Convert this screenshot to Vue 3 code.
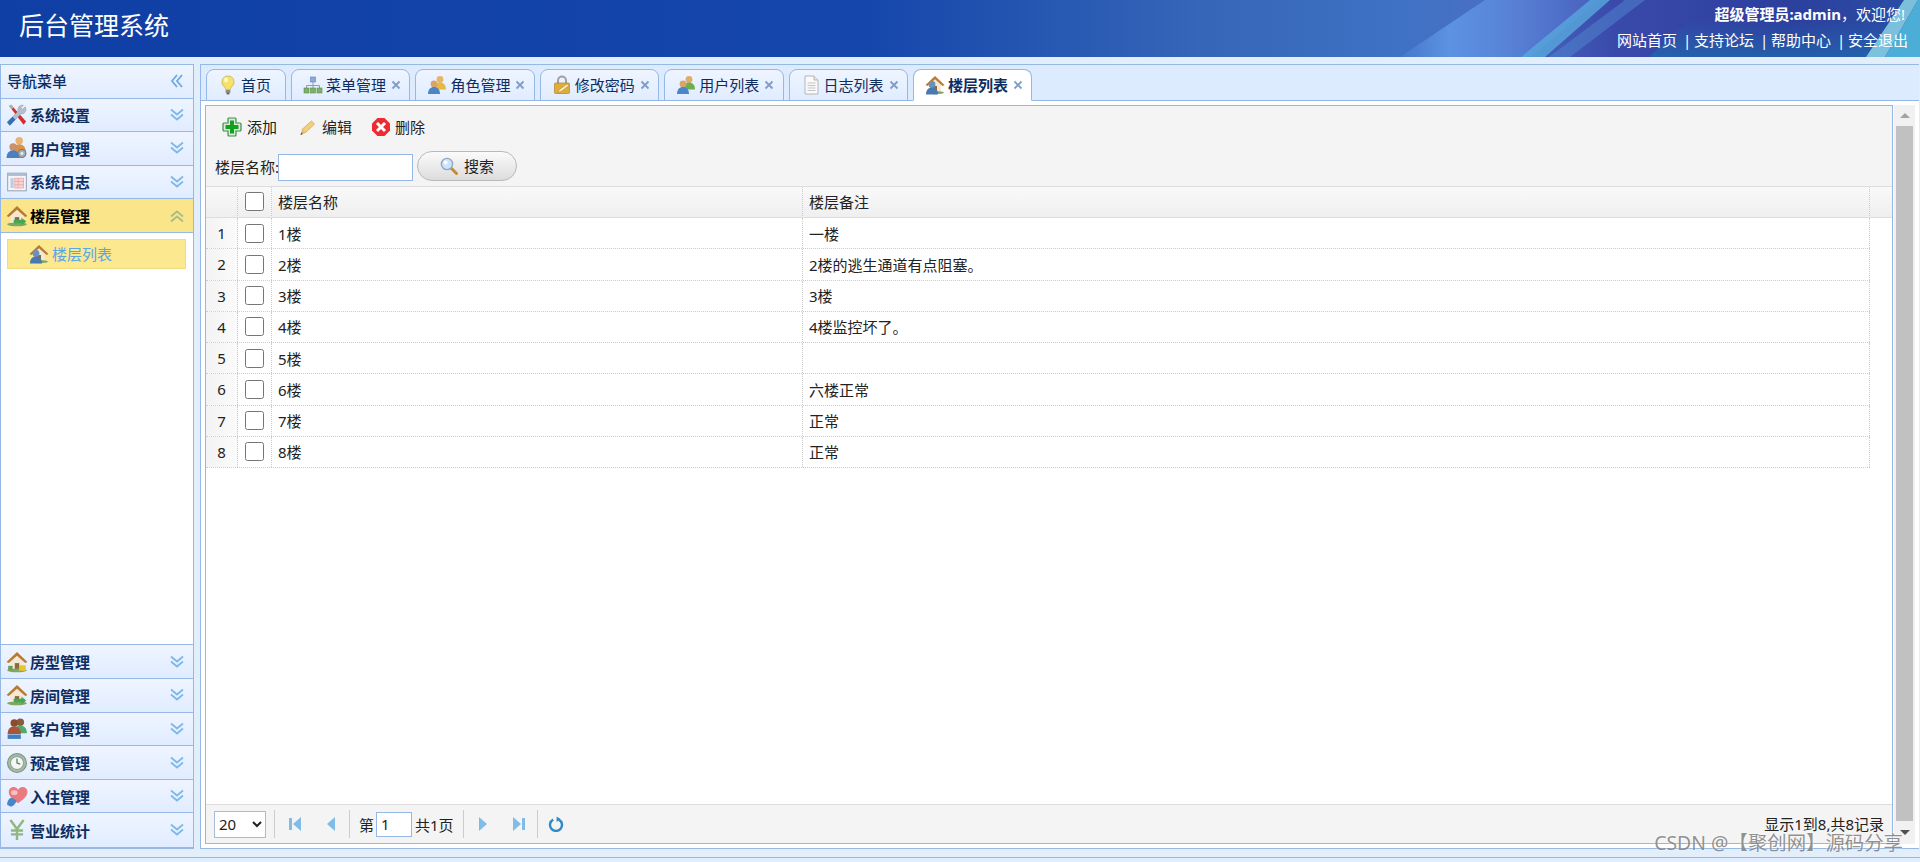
<template>
  <div class="page">
    <header class="top">
      <svg class="top-art" viewBox="0 0 1920 57" preserveAspectRatio="none">
        <defs>
          <linearGradient id="topBase" x1="0" x2="1" y1="0" y2="0">
            <stop offset="0" stop-color="#0f3fa5" />
            <stop offset="0.45" stop-color="#1546ab" />
            <stop offset="0.625" stop-color="#3566b8" />
            <stop offset="0.73" stop-color="#3f72c4" />
            <stop offset="0.78" stop-color="#4a6fc4" />
            <stop offset="0.84" stop-color="#3a4aab" />
            <stop offset="0.93" stop-color="#2c3f9d" />
            <stop offset="1" stop-color="#2a4ea5" />
          </linearGradient>
          <linearGradient id="topBand" x1="0" x2="1" y1="0" y2="0">
            <stop offset="0" stop-color="#5f96e6" stop-opacity="0.15" />
            <stop offset="0.25" stop-color="#5f96e6" stop-opacity="0.9" />
            <stop offset="1" stop-color="#5f80d8" stop-opacity="0.3" />
          </linearGradient>
          <linearGradient id="topGlow" x1="0" x2="0" y1="0" y2="1">
            <stop offset="0" stop-color="#2168ae" stop-opacity="0" />
            <stop offset="1" stop-color="#2168ae" stop-opacity="0.75" />
          </linearGradient>
        </defs>
        <rect width="1920" height="57" fill="url(#topBase)" />
        <polygon points="1400,57 1530,57 1600,0 1485,0" fill="url(#topBand)" />
        <polygon points="1649,57 1880,57 1920,20 1690,20" fill="url(#topGlow)" />
        <polygon points="1521,57 1545,57 1610,0 1590,0" fill="#58a8dc" opacity="0.8" />
        <polygon points="1549,57 1570,57 1645,0 1625,0" fill="#4f88d0" opacity="0.5" />
        <polygon points="1866,57 1885,57 1918,0 1904,0" fill="#8ad4e6" opacity="0.85" />
        <polygon points="1885,57 1920,57 1920,0 1918,0" fill="#4caed6" />
      </svg>
      <h1 class="top-title">后台管理系统</h1>
      <div class="top-right">
        <div class="top-user"><b>超级管理员:admin</b>，欢迎您!</div>
        <div class="top-links">
          <template v-for="(link, i) in topLinks" :key="link">
            <span v-if="i" class="top-sep">|</span>
            <span>{{ link }}</span>
          </template>
        </div>
      </div>
    </header>

    <div class="layout">
      <aside class="side">
        <div class="nav-title">
          <span>导航菜单</span>
          <svg class="chev chev-left" viewBox="0 0 14 14"><path d="M7 1 2 7l5 6M12 1 7 7l5 6" /></svg>
        </div>
        <div v-for="item in navTop" :key="item.label" class="nav-row" :class="{ 'nav-row--on': item.active }">
          <svg class="nav-icon" viewBox="0 0 20 20" v-html="icons[item.icon]"></svg>
          <span class="nav-text">{{ item.label }}</span>
          <svg class="chev" viewBox="0 0 14 14"><path :d="item.active ? chevUp : chevDown" /></svg>
        </div>
        <div class="nav-body">
          <div class="nav-leaf">
            <svg class="leaf-icon" viewBox="0 0 20 20" v-html="icons.houseUser"></svg>
            <span>楼层列表</span>
          </div>
        </div>
        <div v-for="item in navBottom" :key="item.label" class="nav-row">
          <svg class="nav-icon" viewBox="0 0 20 20" v-html="icons[item.icon]"></svg>
          <span class="nav-text">{{ item.label }}</span>
          <svg class="chev" viewBox="0 0 14 14"><path :d="chevDown" /></svg>
        </div>
      </aside>

      <main class="main">
        <div class="tabs">
          <div
            v-for="tab in tabs"
            :key="tab.label"
            class="tab"
            :class="{ 'tab--on': tab.active, 'tab--home': !tab.close }"
          >
            <svg class="tab-icon" viewBox="0 0 20 20" v-html="icons[tab.icon]"></svg>
            <span class="tab-text">{{ tab.label }}</span>
            <svg v-if="tab.close" class="tab-close" viewBox="0 0 10 10"><path d="M1.5 1.5l7 7M8.5 1.5l-7 7" /></svg>
          </div>
        </div>

        <div class="content">
          <section class="grid-box">
            <div class="toolbar">
              <div class="tool-row">
                <span class="tool-btn">
                  <svg class="tool-add" viewBox="0 0 20 20">
                    <path d="M7 1h6a1 1 0 0 1 1 1v4h4a1 1 0 0 1 1 1v6a1 1 0 0 1-1 1h-4v4a1 1 0 0 1-1 1H7a1 1 0 0 1-1-1v-4H2a1 1 0 0 1-1-1V7a1 1 0 0 1 1-1h4V2a1 1 0 0 1 1-1z" fill="#d9ecd8" stroke="#3d8a4a" stroke-width="1.2" />
                    <path d="M8 3.5h4V8h4.5v4H12v4.5H8V12H3.5V8H8z" fill="#13a11f" />
                  </svg>
                  <span class="tool-text">添加</span>
                </span>
                <span class="tool-btn tool-btn--edit">
                  <svg class="tool-pen" viewBox="0 0 18 18">
                    <path d="M3 11.5 12.5 3l3 3L6 15z" fill="#f2d079" stroke="#d6a640" stroke-width="0.8" />
                    <path d="M3 11.5 1.5 17 6 15z" fill="#e6b878" />
                    <path d="M1.5 17l.8-2.6 1.7 1.6z" fill="#5e5140" />
                  </svg>
                  <span class="tool-text">编辑</span>
                </span>
                <span class="tool-btn tool-btn--del">
                  <svg class="tool-del" viewBox="0 0 18 18">
                    <path d="M5.5 0h7L18 5.5v7L12.5 18h-7L0 12.5v-7z" fill="#ee2b30" />
                    <path d="M5 5l8 8M13 5l-8 8" stroke="#fff" stroke-width="3" />
                  </svg>
                  <span class="tool-text">删除</span>
                </span>
              </div>
              <div class="search-row">
                <label class="search-label">楼层名称:</label>
                <input class="search-input" type="text" />
                <button class="search-btn" type="button">
                  <svg class="search-icon" viewBox="0 0 18 18">
                    <path d="M11 11l5.5 5.5" stroke="#c98a35" stroke-width="3" stroke-linecap="round" />
                    <circle cx="7" cy="7" r="5.6" fill="#cfe4fa" stroke="#8fa9c4" stroke-width="1.4" />
                    <circle cx="5.6" cy="5.4" r="2" fill="#fff" />
                  </svg>
                  <span class="search-text">搜索</span>
                </button>
              </div>
            </div>

            <div class="grid-head">
              <div class="cell cell-num"></div>
              <div class="cell cell-check"><input type="checkbox" class="check" /></div>
              <div class="cell cell-text">楼层名称</div>
              <div class="cell cell-text">楼层备注</div>
              <div class="cell-fill"></div>
            </div>
            <div class="grid-body">
              <div v-for="(row, i) in rows" :key="row.name" class="grid-row">
                <div class="cell cell-num">{{ i + 1 }}</div>
                <div class="cell cell-check"><input type="checkbox" class="check" /></div>
                <div class="cell cell-text">{{ row.name }}</div>
                <div class="cell cell-text">{{ row.note }}</div>
              </div>
            </div>

            <div class="pager">
              <select class="pager-size"><option>20</option></select>
              <span class="pager-sep pager-sep--first"></span>
              <span class="pager-btn"><svg viewBox="0 0 14 16"><path d="M1 2h3v12H1zM13 1v14L5 8z" /></svg></span>
              <span class="pager-btn"><svg viewBox="0 0 14 16"><path d="M11 1v14L3 8z" /></svg></span>
              <span class="pager-sep"></span>
              <span class="pager-label">第</span>
              <input class="pager-input" type="text" value="1" />
              <span class="pager-label pager-label--total">共1页</span>
              <span class="pager-sep pager-sep--mid"></span>
              <span class="pager-btn"><svg viewBox="0 0 14 16"><path d="M3 1v14l8-7z" /></svg></span>
              <span class="pager-btn"><svg viewBox="0 0 14 16"><path d="M1 1v14l8-7zM10 2h3v12h-3z" /></svg></span>
              <span class="pager-sep pager-sep--tight"></span>
              <span class="pager-btn">
                <svg class="pager-refresh" viewBox="0 0 16 16">
                  <path d="M5.2 3.6A6 6 0 1 0 10.8 3.6" fill="none" stroke="#2f8ac8" stroke-width="2.4" />
                  <path d="M8.6 0.5v5.6L12.6 3z" fill="#2f8ac8" />
                </svg>
              </span>
              <span class="pager-info">显示1到8,共8记录</span>
            </div>
          </section>

          <div class="scrollbar">
            <span class="scroll-arrow scroll-arrow--up"></span>
            <span class="scroll-thumb"></span>
            <span class="scroll-arrow scroll-arrow--down"></span>
          </div>
        </div>
      </main>
    </div>

    <footer class="bottom"></footer>
    <div class="watermark">CSDN @【聚创网】源码分享</div>
  </div>
</template>

<script setup>
const chevDown = 'M1 1.5 7 6.5l6-5M1 6.5l6 5 6-5'
const chevUp = 'M1 7.5l6-5 6 5M1 12.5l6-5 6 5'

const house =
  '<path d="M4 9.5 10 4l6 5.5V17H4z" fill="#f4e8d2"/>' +
  '<path d="M10 1 19.5 10l-2 1L10 4.3 2.5 11l-2-1z" fill="#b87a30"/>' +
  '<rect x="8" y="11" width="4" height="6" fill="#8b6a40"/>' +
  '<ellipse cx="10" cy="17.6" rx="9" ry="1.7" fill="#7fa763"/>'

const person = (x, y, body, head) =>
  `<circle cx="${x}" cy="${y}" r="3.4" fill="${head}"/>` +
  `<path d="M${x - 6} ${y + 10}c0-4.500 2.500-7 6-7s6 2.500 6 7z" fill="${body}"/>`

const icons = {
  bulb:
    '<path d="M10 1a6 6 0 0 0-3.4 11c.8.7 1 1.6 1 2.6h4.8c0-1 .2-1.9 1-2.6A6 6 0 0 0 10 1z" fill="#f6e26a" stroke="#c9b44a" stroke-width=".8"/>' +
    '<ellipse cx="8" cy="5" rx="2" ry="2.4" fill="#fdf8c8"/>' +
    '<rect x="7.6" y="15" width="4.8" height="3" rx=".8" fill="#8c8c7a"/><rect x="8.6" y="18" width="2.8" height="1.4" fill="#5f5f55"/>',
  sitemap:
    '<rect x="7.5" y="2" width="5" height="5" fill="#8fa9d8" stroke="#5f7eb8" stroke-width=".6"/>' +
    '<path d="M10 7v3M3.5 13v-2.5h13V13M10 10v3" stroke="#8d9db5" fill="none"/>' +
    '<rect x="1" y="13" width="5" height="5" fill="#7fb069" stroke="#5c8a48" stroke-width=".6"/>' +
    '<rect x="7.5" y="13" width="5" height="5" fill="#7fb069" stroke="#5c8a48" stroke-width=".6"/>' +
    '<rect x="14" y="13" width="5" height="5" fill="#7fb069" stroke="#5c8a48" stroke-width=".6"/>',
  role: person(13, 4.4, '#e8b93f', '#e9b464') + person(7, 9, '#4a86c8', '#d9a36c'),
  lock:
    '<path d="M6 8V5.5a4 4 0 0 1 8 0V8" fill="none" stroke="#a0a0a0" stroke-width="2"/>' +
    '<rect x="2.5" y="8" width="15" height="10.5" rx="1" fill="#e0ac3c" stroke="#b5832a" stroke-width=".7"/>' +
    '<path d="M7 15l8-6 2 1.6-8 6-3 .8z" fill="#fbf1c0" stroke="#a87c2a" stroke-width=".5"/>',
  userList: person(13, 4.4, '#6dae4f', '#e2ac63') + person(7, 9, '#4a86c8', '#dba36b'),
  doc:
    '<path d="M4 1h9l4 4v14H4z" fill="#fafafa" stroke="#b5b5b5"/>' +
    '<path d="M13 1v4h4" fill="#e6e6e6" stroke="#b5b5b5"/>' +
    '<path d="M6.5 8h8M6.5 10.5h8M6.5 13h8M6.5 15.5h8" stroke="#c2c2c2"/>',
  houseUser: house + person(7, 9.5, '#4a78b0', '#6a91bd'),
  tools:
    '<path d="M3 2l1.8-1 13.5 15-2.3 2.800z" fill="#d62c2c"/>' +
    '<path d="M2.5 1.5 5 .5l2 3-2 1.3z" fill="#aab4c0"/>' +
    '<path d="M17.5 2.5l-2.6 2.3-1.4-1.3L15.800 1A4.200 4.200 0 0 0 11 6.500L1 16.500l2.500 3L13.500 9a4.200 4.200 0 0 0 4-6.500z" fill="#b4bfcb" stroke="#8794a3" stroke-width=".4"/>' +
    '<path d="M1 16.500l5-5 2.500 2.800-5 5.200z" fill="#2f6fc0"/>',
  userAdmin:
    person(12, 3.5, '#e0913f', '#e8b475') +
    person(6.5, 9, '#4a7fc0', '#c9926a') +
    '<circle cx="14.5" cy="15" r="3.6" fill="#a5adb5" stroke="#6e7780"/><circle cx="14.5" cy="15" r="1.3" fill="#eee"/>',
  log:
    '<rect x="1.5" y="2" width="17" height="16" fill="#f6f6fa" stroke="#9aa8b8"/>' +
    '<rect x="1.5" y="2" width="17" height="2.5" fill="#a9bdd4"/>' +
    '<rect x="4" y="6.5" width="3" height="9" fill="#b8cfe8"/>' +
    '<rect x="8" y="6.5" width="8" height="9" fill="#f7d5d5" stroke="#e39a9a" stroke-width=".6"/>' +
    '<path d="M8 9.5h8M8 12.5h8M11 6.5v9" stroke="#e39a9a" stroke-width=".6"/>',
  houseA: house + '<rect x="12" y="13" width="6" height="5" fill="#e6c532"/>' + '<rect x="2" y="13.5" width="4" height="4" fill="#6f9a55"/>',
  houseB: house + '<path d="M7 13.5h7v-2l4.500 3.500-4.500 3.500v-2H7z" fill="#43a851"/>',
  customer:
    person(13, 3.8, '#55a86a', '#8a5a3a') +
    person(7.5, 4.5, '#a8553a', '#8a4a2e') +
    '<rect x="1.5" y="15" width="12" height="4" fill="#3f7fc2"/>',
  clock:
    '<circle cx="10" cy="10" r="8.600" fill="#a7bda5" stroke="#7c9580"/>' +
    '<circle cx="10" cy="10" r="6" fill="#f4f7f5" stroke="#8fa596"/>' +
    '<path d="M10 6v4l3 1" stroke="#67806d" fill="none" stroke-width="1.2"/>',
  heart:
    '<path d="M11 4.500C12.500 .5 19.500 1 19.500 6.500c0 4-4.500 7-8.500 10-4-3-8.500-6-8.500-10C2.500 1 9.500 .5 11 4.500z" fill="#ea7a80"/>' +
    '<ellipse cx="7.5" cy="7" rx="3" ry="2.2" fill="#f7c0c2"/>' +
    '<path d="M1 18c0-4 2-6.500 4.500-6.500l4 2.500c-.5 3-3 5.500-5.500 5.500z" fill="#4a85c7"/>',
  yen:
    '<path d="M4 1l6 8 6-8M10 9v10M4.500 10.500h11M4.500 14h11" stroke="#8fb87e" stroke-width="2.2" fill="none"/>'
}

const topLinks = ['网站首页', '支持论坛', '帮助中心', '安全退出']

const navTop = [
  { label: '系统设置', icon: 'tools' },
  { label: '用户管理', icon: 'userAdmin' },
  { label: '系统日志', icon: 'log' },
  { label: '楼层管理', icon: 'houseB', active: true }
]

const navBottom = [
  { label: '房型管理', icon: 'houseA' },
  { label: '房间管理', icon: 'houseB' },
  { label: '客户管理', icon: 'customer' },
  { label: '预定管理', icon: 'clock' },
  { label: '入住管理', icon: 'heart' },
  { label: '营业统计', icon: 'yen' }
]

const tabs = [
  { label: '首页', icon: 'bulb' },
  { label: '菜单管理', icon: 'sitemap', close: true },
  { label: '角色管理', icon: 'role', close: true },
  { label: '修改密码', icon: 'lock', close: true },
  { label: '用户列表', icon: 'userList', close: true },
  { label: '日志列表', icon: 'doc', close: true },
  { label: '楼层列表', icon: 'houseUser', close: true, active: true }
]

const rows = [
  { name: '1楼', note: '一楼' },
  { name: '2楼', note: '2楼的逃生通道有点阻塞。' },
  { name: '3楼', note: '3楼' },
  { name: '4楼', note: '4楼监控坏了。' },
  { name: '5楼', note: '' },
  { name: '6楼', note: '六楼正常' },
  { name: '7楼', note: '正常' },
  { name: '8楼', note: '正常' }
]
</script>

<style>
html,
body {
  margin: 0;
  overflow: hidden;
}
</style>

<style scoped>
.page {
  position: relative;
  display: flex;
  flex-direction: column;
  height: 862px;
  overflow: hidden;
  background: #e3eefb;
  color: #222;
  font-family: "Noto Sans", "Noto Sans CJK SC", sans-serif;
  font-size: 15px;
}

.top {
  position: relative;
  display: flex;
  justify-content: space-between;
  height: 57px;
  flex: none;
  color: #fff;
}

.top-art {
  position: absolute;
  inset: 0;
  width: 100%;
  height: 100%;
}

.top-title {
  position: relative;
  margin: 7px 0 0 19px;
  font-size: 25px;
  font-weight: 400;
  line-height: 36px;
}

.top-right {
  position: relative;
  display: flex;
  flex-direction: column;
  align-items: flex-end;
  padding: 4px 12px 0 0;
  line-height: 20px;
}

.top-user {
  margin-right: 3px;
  font-size: 15px;
}

.top-links {
  display: flex;
  gap: 6px;
  margin-top: 6px;
  font-size: 15px;
}

.top-sep {
  width: 5px;
  text-align: center;
}

.layout {
  display: flex;
  flex: 1;
  min-height: 0;
  gap: 6px;
  padding: 7px 1px 8px 0;
}

.side {
  display: flex;
  flex-direction: column;
  flex: none;
  width: 194px;
  box-sizing: border-box;
  border: 1px solid #95b8e7;
  border-bottom-width: 2px;
  background: #fff;
}

.nav-title,
.nav-row {
  display: flex;
  align-items: center;
  flex: none;
  box-sizing: border-box;
  padding: 0 9px 0 5px;
  border-bottom: 1px solid #95b8e7;
  background: linear-gradient(#eff5ff, #e0ecff);
  color: #0e2d5f;
  font-weight: 700;
}

.nav-title {
  justify-content: space-between;
  height: 33.5px;
  padding-left: 6px;
  padding-bottom: 2px;
  font-weight: 500;
}

.nav-title .chev {
  margin-top: 2px;
}

.nav-row {
  height: 33.6px;
}

.nav-row--on {
  background: #fbe58a;
  color: #000;
}

.nav-row:last-child {
  border-bottom: 0;
}

.nav-icon {
  width: 22px;
  height: 22px;
  flex: none;
  margin-right: 2px;
}

.nav-text {
  flex: 1;
}

.chev {
  width: 14px;
  height: 14px;
  flex: none;
  fill: none;
  stroke: #7db8ea;
  stroke-width: 1.8;
}

.nav-row--on .chev {
  stroke: #a7bd84;
}

.chev-left {
  stroke: #6ba9e0;
}

.nav-body {
  flex: 1;
  min-height: 0;
  padding: 6px 7px 0 6px;
  border-bottom: 1px solid #95b8e7;
}

.nav-leaf {
  display: flex;
  align-items: center;
  gap: 3px;
  height: 28px;
  padding-left: 21px;
  border: 1px solid #f3dc7f;
  background: #fbe88f;
  color: #58a6e6;
}

.leaf-icon {
  width: 20px;
  height: 20px;
}

.main {
  display: flex;
  flex: 1;
  flex-direction: column;
  min-width: 0;
  border: 1px solid #95b8e7;
  border-right: 0;
  background: #fff;
}

.tabs {
  display: flex;
  flex: none;
  align-items: flex-end;
  gap: 5px;
  height: 36px;
  box-sizing: border-box;
  padding-left: 5px;
  border-bottom: 1px solid #95b8e7;
  background: #dcebfe;
}

.tab {
  display: flex;
  align-items: center;
  width: 119.4px;
  height: 32px;
  box-sizing: border-box;
  margin-bottom: -1px;
  padding: 0 0 1px 11px;
  border: 1px solid #95b8e7;
  border-radius: 8px 8px 0 0;
  background: linear-gradient(#eff5ff, #e0ecff);
  color: #0e2d5f;
}

.tab--home {
  width: 80px;
  padding-left: 11px;
}

.tab--on {
  border-bottom-color: #fff;
  background: #fff;
  font-weight: 700;
}

.tab-icon {
  width: 20px;
  height: 20px;
  flex: none;
  margin-right: 3px;
}

.tab-close {
  width: 10px;
  height: 10px;
  margin-left: 5px;
  fill: none;
  stroke: #7f9cc7;
  stroke-width: 1.8;
}

.content {
  display: flex;
  flex: 1;
  min-height: 0;
  padding: 4px;
}

.grid-box {
  display: flex;
  flex: 1;
  flex-direction: column;
  min-width: 0;
  border: 1px solid #95b8e7;
}

.toolbar {
  flex: none;
  height: 80px;
  box-sizing: border-box;
  background: #f4f4f4;
}

.tool-row {
  display: flex;
  align-items: center;
  height: 20px;
  padding: 11px 0 0 16px;
}

.tool-btn {
  display: flex;
  align-items: center;
  gap: 5px;
}

.tool-text,
.search-text {
  padding-bottom: 2px;
}

.tool-btn--edit {
  margin-left: 22px;
}

.tool-btn--del {
  margin-left: 20px;
}

.tool-add {
  width: 20px;
  height: 20px;
}

.tool-pen,
.tool-del {
  width: 18px;
  height: 18px;
}

.search-row {
  display: flex;
  align-items: flex-start;
  margin-top: 14px;
  padding-left: 9px;
}

.search-label {
  flex: none;
  width: 63px;
  margin-top: 5px;
  line-height: 22px;
  white-space: nowrap;
}

.search-input {
  flex: none;
  width: 135px;
  height: 27px;
  box-sizing: border-box;
  margin-top: 3px;
  border: 1px solid #95b8e7;
  background: #fff;
  outline: 0;
}

.search-btn {
  display: flex;
  align-items: center;
  justify-content: center;
  gap: 6px;
  width: 100px;
  height: 30px;
  margin-left: 4px;
  padding: 0;
  border: 1px solid #b9b9b9;
  border-radius: 15px;
  background: linear-gradient(#fbfbfb, #dcdcdc);
  color: #222;
  font: inherit;
}

.search-icon {
  width: 18px;
  height: 18px;
}

.grid-head,
.grid-row {
  display: grid;
  grid-template-columns: 32px 34px 531px 1067px;
}

.grid-head {
  flex: none;
  grid-template-columns: 32px 34px 531px 1067px 1fr;
  height: 32px;
  box-sizing: border-box;
  padding-bottom: 1px;
  border-top: 1px solid #ddd;
  border-bottom: 1px solid #ddd;
  background: linear-gradient(#f9f9f9, #efefef);
}

.grid-body {
  flex: 1;
  min-height: 0;
}

.grid-row {
  width: 1664px;
  height: 31.25px;
  box-sizing: border-box;
  border-bottom: 1px dotted #ccc;
}

.cell {
  display: flex;
  align-items: center;
  box-sizing: border-box;
  border-right: 1px dotted #ccc;
}

.cell-num {
  justify-content: center;
  background: linear-gradient(90deg, #f3f3f3, #fbfbfb);
}

.grid-head .cell-num {
  background: none;
}

.cell-check {
  justify-content: center;
}

.cell-text {
  padding-left: 6px;
}

.check {
  width: 19px;
  height: 19px;
  margin: 0;
}

.pager {
  display: flex;
  flex: none;
  align-items: center;
  height: 39px;
  box-sizing: border-box;
  padding-left: 8px;
  border-top: 1px solid #ddd;
  background: #f4f4f4;
}

.pager-size {
  width: 52px;
  height: 27px;
  border: 1px solid #a9bcd6;
  background: #fff;
  font: inherit;
  color: #222;
}

.pager-sep {
  width: 1px;
  height: 28px;
  background: #ccc;
}

.pager-sep--first {
  margin: 0 2px 0 8px;
}

.pager-sep--mid {
  margin: 0 1px 0 9px;
}

.pager-btn {
  display: flex;
  align-items: center;
  justify-content: center;
  width: 36px;
}

.pager-btn svg {
  width: 14px;
  height: 16px;
  fill: #7fbde8;
}

.pager-btn .pager-refresh {
  width: 16px;
  height: 16px;
}

.pager-label {
  margin-left: 9px;
}

.pager-label--total {
  margin-left: 3px;
}

.pager-input {
  width: 36px;
  height: 25px;
  box-sizing: border-box;
  margin-left: 2px;
  padding: 0 0 0 4px;
  border: 1px solid #95b8e7;
  background: #fff;
  color: #222;
  font: inherit;
  outline: 0;
}

.pager-info {
  margin-left: auto;
  padding-right: 8px;
  line-height: 18px;
}

.scrollbar {
  display: flex;
  flex: none;
  flex-direction: column;
  align-items: center;
  width: 21px;
  margin-left: 1px;
  background: #f1f1f1;
}

.scroll-arrow {
  flex: none;
  width: 0;
  height: 0;
  border-left: 5px solid transparent;
  border-right: 5px solid transparent;
}

.scroll-arrow--up {
  margin: 8px 0 8px;
  border-bottom: 5px solid #a3a3a3;
}

.scroll-arrow--down {
  margin: 9px 0 0;
  border-top: 5px solid #505050;
}

.scroll-thumb {
  flex: none;
  width: 17px;
  height: 695px;
  background: #c1c1c1;
}

.bottom {
  flex: none;
  height: 4px;
  border-top: 1px solid #95b8e7;
  background: #e0edff;
}

.watermark {
  position: absolute;
  right: 17px;
  bottom: 9px;
  color: rgba(110, 110, 110, 0.75);
  font-size: 19.4px;
  line-height: 20px;
  text-shadow: 0 0 2px rgba(255, 255, 255, 0.8);
}
</style>
